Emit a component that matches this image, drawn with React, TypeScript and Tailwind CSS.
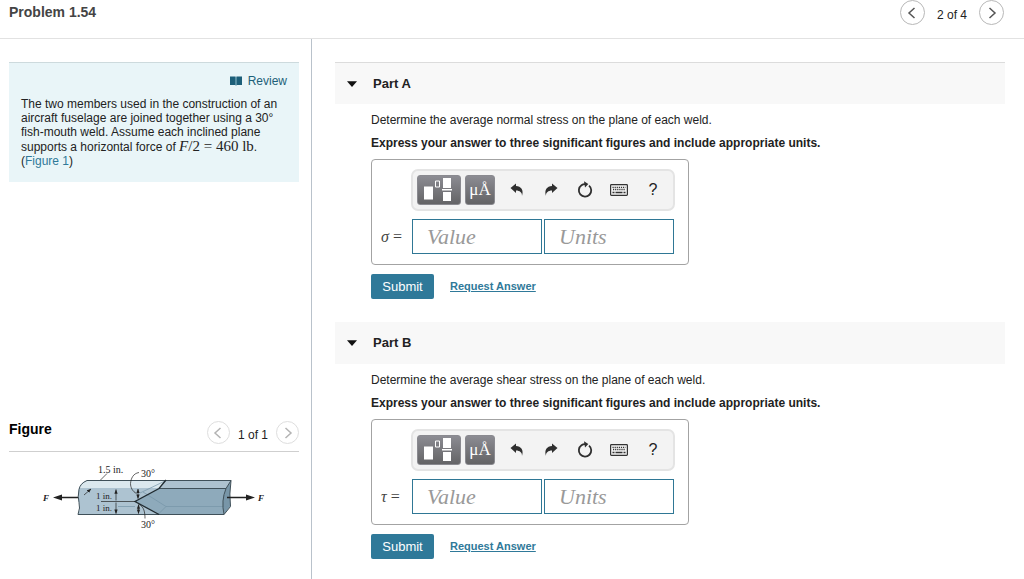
import React from "react";

const SANS = "font-['Liberation_Sans',Arial,sans-serif]";
const SERIF = "font-['Liberation_Serif','Times_New_Roman',serif]";

function Chevron({ dir }: { dir: "left" | "right" }) {
  return (
    <svg viewBox="0 0 12 12" className="size-3" fill="none" stroke="currentColor" strokeWidth="1.5">
      <path d={dir === "left" ? "M8.5 1 3 6l5.5 5" : "M3.5 1 9 6l-5.5 5"} />
    </svg>
  );
}

function Pager({ label, muted }: { label: string; muted?: boolean }) {
  const tone = muted
    ? "size-[23px] border-[#dedede] text-[#b3b3b3]"
    : "size-[25px] border-[#b8b8b8] text-[#555]";
  return (
    <nav className={muted ? "flex items-center gap-2" : "flex items-center gap-3"}>
      <button type="button" aria-label="Previous" className={`flex items-center justify-center rounded-full border ${tone}`}>
        <Chevron dir="left" />
      </button>
      <span className="pt-1 text-[12px] leading-4 text-[#222]">{label}</span>
      <button type="button" aria-label="Next" className={`flex items-center justify-center rounded-full border ${tone}`}>
        <Chevron dir="right" />
      </button>
    </nav>
  );
}

function BookIcon() {
  return (
    <svg viewBox="0 0 12 10" className="h-[10px] w-3" fill="#1d5f79">
      <path d="M0 .6h5.600V9H0ZM6.400.6H12V9H6.400Z" />
      <path d="M5.300 1.200h1.400V9.600H5.300z" fill="#4d8aa0" />
    </svg>
  );
}

function TemplatesIcon() {
  return (
    <svg viewBox="0 0 42 28" className="h-[28px] w-[42px] shrink-0" fill="#fff">
      <path d="M6 10.500h9v13H6zM25 2h8v10h-8zM25 16h8v9h-8zM24 13h10v1.500H24z" />
      <path d="M17.500 5h4v6h-4z" fill="none" stroke="#fff" strokeWidth="1" />
    </svg>
  );
}

function UndoIcon() {
  return (
    <svg viewBox="0 0 14 14" className="size-[14px]" fill="#2f2f2f">
      <path d="M.5 5 6 .5V3C11 3.200 14 7 12 13 12.200 9.500 9.800 7.700 6 7.600V10Z" />
    </svg>
  );
}

function RedoIcon() {
  return (
    <svg viewBox="0 0 14 14" className="size-[14px]" fill="#2f2f2f">
      <path d="M13.500 5 8 .5V3C3 3.200 0 7 2 13 1.800 9.500 4.200 7.700 8 7.600V10Z" />
    </svg>
  );
}

function ResetIcon() {
  return (
    <svg viewBox="0 0 16 18" className="h-[18px] w-4" fill="none" stroke="#2f2f2f" strokeWidth="1.800">
      <path d="M12 4.600A6.200 6.200 0 1 1 4.500 4.300 6 6 0 0 1 8 3.200" />
      <path d="M7 .3 11.300 3 8 6.500Z" fill="#2f2f2f" stroke="none" />
    </svg>
  );
}

function KeyboardIcon() {
  return (
    <svg viewBox="0 0 18 12" className="h-3 w-[18px]" fill="none" stroke="#333">
      <rect x=".6" y=".6" width="16.800" height="10.800" rx=".8" strokeWidth="1.200" />
      <path d="M2.500 3.300h13M3 5.500h12.500" strokeWidth="1.300" strokeDasharray="1.200 .9" />
      <path d="M2.500 8.500h2M5.500 8.500h7M13.500 8.500h2" strokeWidth="1.300" />
    </svg>
  );
}

function WeldFigure() {
  return (
    <svg viewBox="9 456 290 80" className="block w-full" role="img" aria-label="Fish-mouth weld between two members">
      <defs>
        <marker id="tip" viewBox="0 0 6 6" refX="5.500" refY="3" markerWidth="4.500" markerHeight="4.500" markerUnits="userSpaceOnUse" orient="auto-start-reverse">
          <path d="M0 .8 6 3 0 5.200Z" fill="#222" />
        </marker>
      </defs>
      <path d="M87 480h79l-7 8H79q2-6 8-8Z" fill="#dbe8ee" />
      <path d="M79 488h80l-24 13.500 24 13H78q3-6 1-12-2-7 0-14.500Z" fill="#adc3d1" />
      <path d="M166 480h65l-5 8h-67Z" fill="#adc2cf" />
      <path d="M159 488h67q-4 12-2 26.500h-65l-24-13Z" fill="#8eaabb" />
      <path d="M231 480q-2 14-.5 26l-6.500 8.500q-3-14 2-26.500Z" fill="#7896a8" />
      <g fill="none" stroke="#7695a7" strokeWidth=".7">
        <path d="M118 506.500h17M166 506.500h64M140 493l25-12M143 492l23 14.500-8 8" />
      </g>
      <g fill="none" stroke="#3f5059" strokeWidth="1">
        <path d="M166 480.500H87q-7 3-8 9-1.500 7 0 13 1.500 5-1 12H159" />
        <path d="M166 480.500h65q-2 14-.5 26l-6.500 8h-65M231 480.500l-5 8q-5 12-2 26M159 488.500h67" />
      </g>
      <path d="m166 480-7 8.500-24 13 24 13" fill="none" stroke="#1f2a30" strokeWidth="1.300" />
      <g fill="none" stroke="#222" strokeWidth=".7">
        <path d="M101 501.500h34" />
        <path d="M116 489.500v11M116 502.500v11" markerStart="url(#tip)" markerEnd="url(#tip)" />
        <path d="M138 498.500V489" markerStart="url(#tip)" markerEnd="url(#tip)" />
        <path d="M138.500 513.500V504.500" markerStart="url(#tip)" markerEnd="url(#tip)" />
        <path d="M107 473.500 100.500 480M84 495l7-6" markerEnd="url(#tip)" />
        <path d="M139 472.500c-6 1-8 6-8.500 11 0 4 2 8 6 10M139 504.500c5 2 6 8 6 14" />
      </g>
      <g stroke="#222" strokeWidth="1.400">
        <path d="M78 497.500H60M227 497.500h20" />
      </g>
      <path d="m53 497.500 9-3v6ZM255 497.500l-9-3v6Z" fill="#222" />
      <g className={SERIF} fontSize="9" fill="#222">
        <text x="98" y="472.500" fontSize="10">1.5 in.</text>
        <text x="96" y="498.500">1 in.</text>
        <text x="96" y="511">1 in.</text>
        <text x="141" y="477" fontSize="10">30°</text>
        <text x="141" y="528" fontSize="10">30°</text>
        <text x="43" y="500.500" fontWeight="bold" fontStyle="italic">F</text>
        <text x="258" y="500.500" fontWeight="bold" fontStyle="italic">F</text>
      </g>
    </svg>
  );
}

const keyStyle =
  "flex h-[30px] items-center justify-center rounded-[3px] border border-[#8a8a90] bg-linear-to-b from-[#8c8c93] to-[#646466] text-white";
const toolStyle = "flex h-[30px] w-[34px] items-center justify-center";
const fieldStyle = `h-[35px] w-[130px] border border-[#2f7795] bg-white px-[14px] text-[22px] italic text-[#333] outline-none placeholder:text-[#999] ${SERIF}`;

function Part({ id, title, kind, symbol, first }: { id: string; title: string; kind: string; symbol: string; first?: boolean }) {
  return (
    <section>
      <h2 className={`flex h-[42px] items-center bg-[#f8f8f8] text-[13px] font-bold text-[#222] ${first ? "border-t border-[#dcdcdc]" : ""}`}>
        <button type="button" className="flex items-center gap-4 pl-3">
          <svg viewBox="0 0 10 6" className="h-[6px] w-[10px]" fill="#111">
            <path d="M0 .3h10L5 6Z" />
          </svg>
          {title}
        </button>
      </h2>
      <div className="pl-9">
        <p className="pt-[9px] text-[12px] leading-[15px] text-[#222]">
          Determine the average {kind} stress on the plane of each weld.
        </p>
        <p className="pt-2 text-[12px] leading-[15px] font-bold text-[#222]">
          Express your answer to three significant figures and include appropriate units.
        </p>
        <div className="mt-2 w-fit rounded-[4px] border border-[#a3a3a3] px-[9px] pt-[9px] pb-[10px]">
          <div className="mr-1 ml-[30px] flex h-[42px] items-center rounded-[7px] border-2 border-[#e4e4e4] bg-[#f3f3f3] pl-1">
            <button type="button" aria-label="Templates" className={`${keyStyle} w-11`}>
              <TemplatesIcon />
            </button>
            <button type="button" aria-label="Units symbols" className={`${keyStyle} ml-1 w-[30px] text-[17px] leading-5 ${SERIF}`}>
              μÅ
            </button>
            <div className="ml-[5px] flex">
              <button type="button" aria-label="Undo" className={toolStyle}><UndoIcon /></button>
              <button type="button" aria-label="Redo" className={toolStyle}><RedoIcon /></button>
              <button type="button" aria-label="Reset" className={toolStyle}><ResetIcon /></button>
              <button type="button" aria-label="Keyboard" className={toolStyle}><KeyboardIcon /></button>
              <button type="button" aria-label="Help" className={`${toolStyle} text-[16px] leading-5 text-[#222]`}>?</button>
            </div>
          </div>
          <div className="mt-2 flex items-center gap-[2px] pr-[5px]">
            <label htmlFor={`${id}-value`} className={`w-[29px] text-[16px] leading-5 whitespace-nowrap text-[#444] ${SERIF}`}>
              <i>{symbol}</i> =
            </label>
            <input id={`${id}-value`} placeholder="Value" className={fieldStyle} />
            <input aria-label="Units" placeholder="Units" className={fieldStyle} />
          </div>
        </div>
        <div className="mt-[9px] flex items-center gap-4">
          <button type="button" className="h-[25px] w-[63px] rounded-[2px] bg-[#2f7999] text-[13px] text-white">
            Submit
          </button>
          <a href="#answer" className="text-[11px] font-bold text-[#2f7999] underline">Request Answer</a>
        </div>
      </div>
    </section>
  );
}

export default function App() {
  return (
    <div className={`flex min-h-screen flex-col bg-white ${SANS}`}>
      <header className="flex h-[39px] items-start justify-between border-b border-[#e2e2e2] pr-5 pl-[9px]">
        <h1 className="pt-1 text-[14px] leading-4 font-bold text-[#444]">Problem 1.54</h1>
        <Pager label="2 of 4" />
      </header>
      <main className="flex flex-1">
        <aside className="flex w-[312px] shrink-0 flex-col justify-between border-r border-[#b9c2cb] pt-[23px] pr-3 pb-[43px] pl-[9px]">
          <div className="border-t border-[#cddadd] bg-[#e9f5f8] px-3 pt-[10px] pb-[14px] text-[12px] text-[#222]">
            <a href="#review" className="flex items-center justify-end gap-[6px] leading-4 text-[#1d5f79]">
              <BookIcon />
              Review
            </a>
            <p className="pt-2 leading-[14px] whitespace-nowrap">
              The two members used in the construction of an
              <br />
              aircraft fuselage are joined together using a 30°
              <br />
              fish-mouth weld. Assume each inclined plane
              <br />
              supports a horizontal force of{" "}
              <span className={`text-[15px] leading-none ${SERIF}`}>
                <i>F</i>/2 = 460 lb
              </span>
              .
              <br />
              (<a href="#figure" className="text-[#2f7999]">Figure 1</a>)
            </p>
          </div>
          <section id="figure">
            <div className="flex items-start justify-between border-b border-[#cfcfcf] pb-[7px]">
              <h2 className="text-[14px] leading-4 font-bold text-black">Figure</h2>
              <Pager label="1 of 1" muted />
            </div>
            <div className="pt-1">
              <WeldFigure />
            </div>
          </section>
        </aside>
        <div className="flex min-w-0 flex-1 flex-col gap-[23px] pt-[23px] pr-[19px] pl-[23px]">
          <Part id="a" title="Part A" kind="normal" symbol="σ" first />
          <Part id="b" title="Part B" kind="shear" symbol="τ" />
        </div>
      </main>
    </div>
  );
}
